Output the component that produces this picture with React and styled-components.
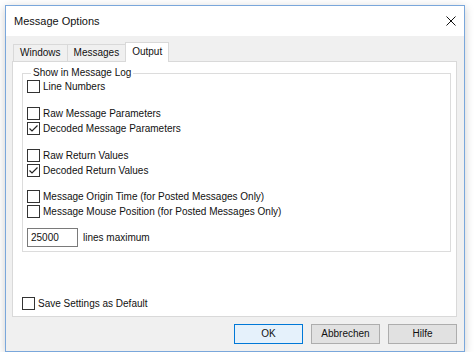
import React from 'react';
import styled, { createGlobalStyle } from 'styled-components';

const GlobalStyle = createGlobalStyle`
  html, body {
    margin: 0;
    padding: 0;
    background: #ffffff;
  }
  body {
    font-family: "Liberation Sans", Arial, sans-serif;
    font-size: 10px;
    color: #111;
  }
`;

const tabs = ['Windows', 'Messages', 'Output'];

const groups = [
  { space: 0, items: [{ label: 'Line Numbers', checked: false }] },
  {
    space: 12,
    items: [
      { label: 'Raw Message Parameters', checked: false },
      { label: 'Decoded Message Parameters', checked: true },
    ],
  },
  {
    space: 12,
    items: [
      { label: 'Raw Return Values', checked: false },
      { label: 'Decoded Return Values', checked: true },
    ],
  },
  {
    space: 11,
    items: [
      { label: 'Message Origin Time (for Posted Messages Only)', checked: false },
      { label: 'Message Mouse Position (for Posted Messages Only)', checked: false },
    ],
  },
];

const CheckBox = ({ checked }) => (
  <Box>
    {checked && (
      <svg width="11" height="11" viewBox="0 0 11 11">
        <path d="M1.5 5.5 L4 8 L9.5 2.5" fill="none" stroke="#222" strokeWidth="1.2" />
      </svg>
    )}
  </Box>
);

const App = () => {
  return (
    <>
      <GlobalStyle />
      <Window>
        <TitleBar>
          <Title>Message Options</Title>
          <svg width="10" height="10" viewBox="0 0 10 10">
            <path d="M0.5 0.5 L9.5 9.5 M9.5 0.5 L0.5 9.5" stroke="#111" strokeWidth="1" />
          </svg>
        </TitleBar>
        <Body>
          <TabRow>
            {tabs.map(t => (
              <Tab key={t} $active={t === 'Output'}>
                {t}
              </Tab>
            ))}
          </TabRow>
          <Panel>
            <Group>
              <Legend>Show in Message Log</Legend>
              {groups.map((g, i) => (
                <Section key={i} $space={g.space}>
                  {g.items.map(item => (
                    <CheckRow key={item.label}>
                      <CheckBox checked={item.checked} />
                      {item.label}
                    </CheckRow>
                  ))}
                </Section>
              ))}
              <LimitRow>
                <NumberField>25000</NumberField>
                lines maximum
              </LimitRow>
            </Group>
            <CheckRow>
              <CheckBox checked={false} />
              Save Settings as Default
            </CheckRow>
          </Panel>
          <ButtonRow>
            <Button $primary>OK</Button>
            <Button>Abbrechen</Button>
            <Button>Hilfe</Button>
          </ButtonRow>
        </Body>
      </Window>
    </>
  );
};

export default App;

const Window = styled.div`
  margin: 5px 0 0 5px;
  width: 460px;
  height: 347px;
  box-sizing: border-box;
  border: 1px solid #7aa7db;
  background: #f0f0f0;
  box-shadow: 0 2px 9px rgba(0, 0, 0, 0.2);
  display: flex;
  flex-direction: column;
`;

const TitleBar = styled.div`
  height: 30px;
  flex: none;
  background: #fff;
  display: flex;
  align-items: center;
  justify-content: space-between;
  padding: 0 8px 0 8px;
`;

const Title = styled.span`
  font-size: 11px;
`;

const Body = styled.div`
  flex: 1;
  display: flex;
  flex-direction: column;
  padding: 6px 7px 0 6px;
`;

const TabRow = styled.div`
  display: flex;
  align-items: flex-end;
  height: 19px;
  padding-left: 1px;
`;

const Tab = styled.div`
  box-sizing: border-box;
  height: ${p => (p.$active ? '20px' : '17px')};
  padding: 0 6px;
  line-height: ${p => (p.$active ? '17px' : '15px')};
  border: 1px solid #d9d9d9;
  border-bottom: none;
  border-right-width: ${p => (p.$active ? '1px' : '0')};
  background: ${p => (p.$active ? '#fff' : '#f0f0f0')};
  margin-bottom: ${p => (p.$active ? '-1px' : '0')};
  position: relative;
  z-index: ${p => (p.$active ? 1 : 0)};
`;

const Panel = styled.div`
  box-sizing: border-box;
  height: 256px;
  background: #fff;
  border: 1px solid #d9d9d9;
  display: flex;
  flex-direction: column;
  justify-content: space-between;
  padding: 5px 5px 5px 9px;
`;

const Group = styled.fieldset`
  margin: 0;
  padding: 0 4px 4px 4px;
  border: 1px solid #dcdcdc;
  display: flex;
  flex-direction: column;
`;

const Legend = styled.legend`
  margin-left: 4px;
  padding: 0 2px;
  line-height: 12px;
`;

const Section = styled.div`
  display: flex;
  flex-direction: column;
  margin-top: ${p => p.$space}px;
`;

const CheckRow = styled.label`
  display: flex;
  align-items: center;
  gap: 3px;
  height: 15px;
  white-space: nowrap;
`;

const Box = styled.span`
  box-sizing: border-box;
  width: 13px;
  height: 13px;
  border: 1px solid #333;
  background: #fff;
  display: inline-flex;
  align-items: center;
  justify-content: center;
`;

const LimitRow = styled.div`
  display: flex;
  align-items: center;
  gap: 5px;
  margin-top: 9px;
`;

const NumberField = styled.div`
  box-sizing: border-box;
  width: 51px;
  height: 19px;
  border: 1px solid #7a7a7a;
  padding-left: 3px;
  line-height: 17px;
`;

const ButtonRow = styled.div`
  display: flex;
  justify-content: flex-end;
  gap: 8px;
  padding-top: 7px;
`;

const Button = styled.div`
  box-sizing: border-box;
  width: 69px;
  height: 20px;
  line-height: 18px;
  text-align: center;
  border: 1px solid ${p => (p.$primary ? '#0078d7' : '#adadad')};
  background: ${p => (p.$primary ? '#e5f1fb' : '#e1e1e1')};
`;
